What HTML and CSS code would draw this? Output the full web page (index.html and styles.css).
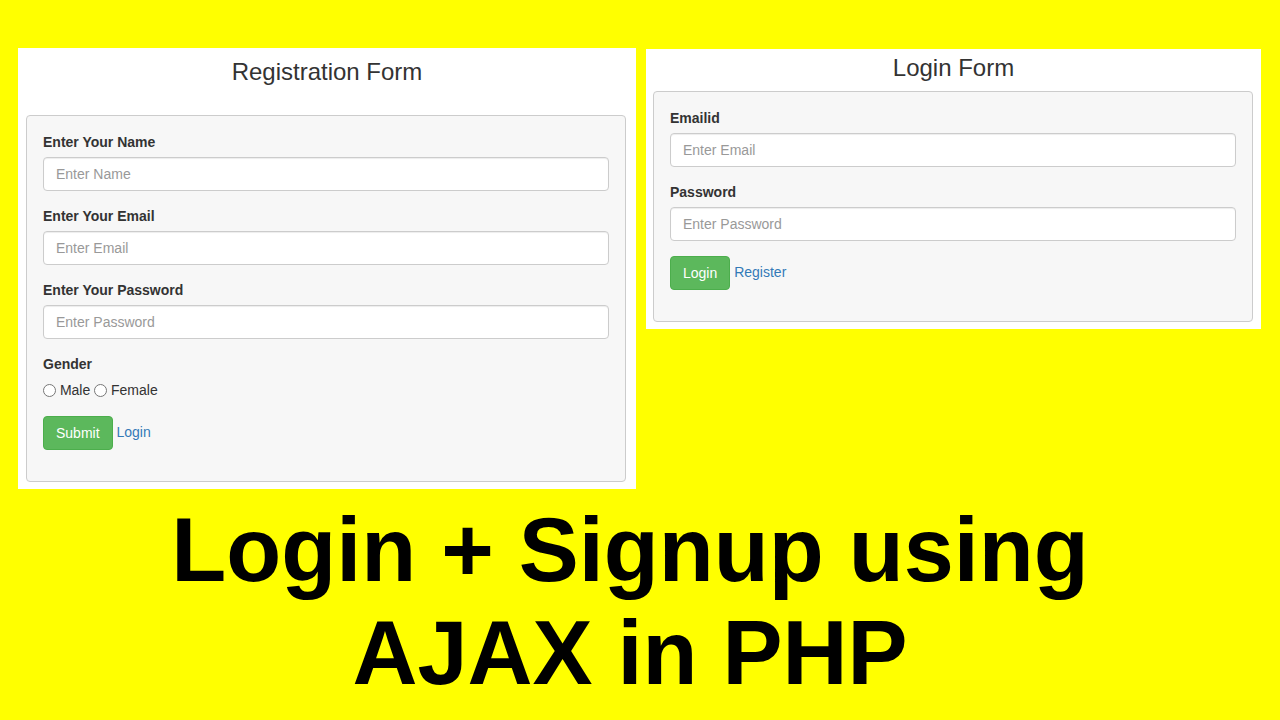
FILE: index.html
```html
<!DOCTYPE html>
<html>
<head>
<meta charset="utf-8">
<link rel="stylesheet" href="styles.css">
</head>
<body>
<div class="page">
  <div class="row">
    <div class="panel panel-reg">
      <h3 class="title title-reg">Registration Form</h3>
      <div class="well well-reg">
        <div class="group">
          <label class="lbl">Enter Your Name</label>
          <input class="field" type="text" placeholder="Enter Name">
        </div>
        <div class="group">
          <label class="lbl">Enter Your Email</label>
          <input class="field" type="text" placeholder="Enter Email">
        </div>
        <div class="group">
          <label class="lbl">Enter Your Password</label>
          <input class="field" type="password" placeholder="Enter Password">
        </div>
        <div class="group-gender">
          <label class="lbl">Gender</label>
          <div class="radios"><input class="radio" type="radio" name="g"> Male <input class="radio" type="radio" name="g"> Female</div>
        </div>
        <div class="actions"><button class="btn">Submit</button> <a class="link" href="#">Login</a></div>
      </div>
    </div>
    <div class="panel panel-login">
      <h3 class="title title-login">Login Form</h3>
      <div class="well well-login">
        <div class="group">
          <label class="lbl">Emailid</label>
          <input class="field" type="text" placeholder="Enter Email">
        </div>
        <div class="group">
          <label class="lbl">Password</label>
          <input class="field" type="password" placeholder="Enter Password">
        </div>
        <div class="actions"><button class="btn">Login</button> <a class="link" href="#">Register</a></div>
      </div>
    </div>
  </div>
  <h1 class="headline">Login + Signup using<br>AJAX in PHP</h1>
</div>
</body>
</html>
```

FILE: styles.css
```css
* { box-sizing: border-box; }
html, body {
  margin: 0;
  padding: 0;
  background: #ffff00;
  width: 1280px;
  height: 720px;
  overflow: hidden;
  font-family: "Liberation Sans", Arial, sans-serif;
}
.page {
  padding: 48px 0 0 18px;
}
.row {
  display: flex;
  align-items: flex-start;
  gap: 10px;
}
.panel {
  background: #ffffff;
  padding: 0 0 7px 0;
}
.panel-reg { width: 618px; }
.panel-login { width: 615px; margin-top: 1px; }
.title {
  margin: 0;
  font-size: 24px;
  line-height: 26px;
  font-weight: normal;
  color: #333333;
  text-align: center;
}
.title-reg { padding-top: 11px; margin-bottom: 30px; }
.title-login { padding-top: 6px; margin-bottom: 10px; }
.well {
  width: 600px;
  background: #f7f7f7;
  border: 1px solid #cccccc;
  border-radius: 4px;
  padding: 16px;
  color: #333333;
  font-size: 14px;
}
.well-reg { margin-left: 8px; }
.well-login { margin-left: 7px; }
.group {
  margin-bottom: 15px;
}
.lbl {
  display: block;
  font-weight: bold;
  font-size: 14px;
  line-height: 20px;
  margin-bottom: 5px;
  color: #333333;
}
.field {
  display: block;
  width: 100%;
  height: 34px;
  padding: 6px 12px;
  font-family: "Liberation Sans", Arial, sans-serif;
  font-size: 14px;
  color: #555555;
  background: #ffffff;
  border: 1px solid #cccccc;
  border-radius: 4px;
  box-shadow: inset 0 1px 1px rgba(0,0,0,0.075);
}
.field::placeholder { color: #999999; }
.group-gender { margin-bottom: 16px; }
.radios {
  font-size: 14px;
  line-height: 22px;
  height: 21px;
  color: #333333;
}
.radio {
  margin: 0;
  width: 13px;
  height: 13px;
  vertical-align: -2px;
}
.actions {
  height: 34px;
  margin-bottom: 15px;
  line-height: 34px;
}
.btn {
  height: 34px;
  padding: 6px 12px;
  font-family: "Liberation Sans", Arial, sans-serif;
  font-size: 14px;
  line-height: 20px;
  color: #ffffff;
  background: #5cb85c;
  border: 1px solid #4cae4c;
  border-radius: 4px;
  vertical-align: top;
}
.link {
  color: #337ab7;
  text-decoration: none;
  font-size: 14px;
  vertical-align: top;
  line-height: 32px;
}
.headline {
  margin: 10px 0 0 -18px;
  width: 1260px;
  text-align: center;
  font-family: "Liberation Sans", Arial, sans-serif;
  font-weight: bold;
  font-size: 90px;
  line-height: 103px;
  color: #000000;
}
```
